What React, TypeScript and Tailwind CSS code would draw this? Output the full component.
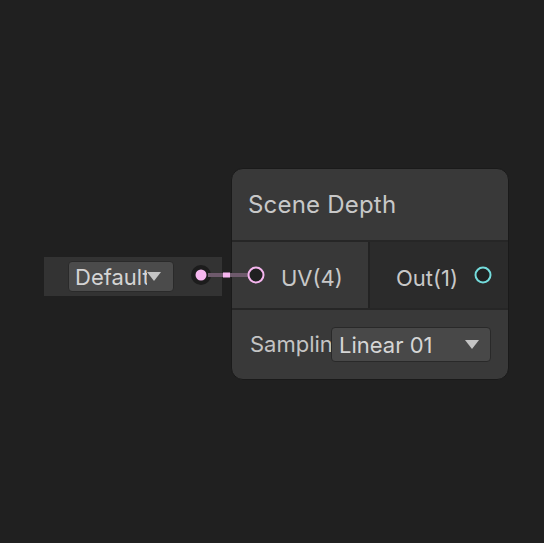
const FONT = { fontFamily: 'Inter, "Noto Sans", sans-serif' };

function Caret({ className }: { className?: string }) {
  return (
    <svg width="14" height="9" viewBox="0 0 14 9" className={className}>
      <path d="M0 0 L14 0 L7 9 Z" fill="#c4c4c4" />
    </svg>
  );
}

function PropertyBlock() {
  return (
    <div className="absolute left-[44px] top-[257px] w-[178px] h-[39px] bg-[#333333] flex items-center">
      <div className="ml-[24px] w-[106px] h-[31px] rounded-[4px] bg-[#4b4b4b] border border-[#2a2a2a] flex items-center pl-[6px]">
        <span className="w-[72px] overflow-hidden whitespace-nowrap text-[22px] leading-none text-[#d4d4d4]">
          Default
        </span>
        <Caret />
      </div>
    </div>
  );
}

function Wire() {
  return (
    <svg className="absolute left-[188px] top-[262px]" width="80" height="26" viewBox="0 0 80 26">
      <circle cx="13" cy="13" r="10" fill="#1c1c1c" />
      <circle cx="13" cy="13" r="5.5" fill="#f6b6ef" />
      <rect x="20" y="11" width="42" height="4" fill="#6e5a6c" />
      <rect x="35" y="10.5" width="7" height="5" fill="#f6b6ef" />
      <circle cx="68" cy="13" r="7.5" fill="#202020" stroke="#f6b6ef" strokeWidth="2" />
    </svg>
  );
}

function SceneDepthNode() {
  return (
    <div className="absolute left-[231px] top-[168px] w-[278px] h-[212px] rounded-[12px] border border-[#1a1a1a] bg-[#393939] overflow-hidden flex flex-col">
      <div className="h-[73px] flex items-center pl-[16px] border-b-[2px] border-[#262626]">
        <span className="text-[24px] text-[#c8c8c8] tracking-[0.2px]">Scene Depth</span>
      </div>
      <div className="h-[66px] flex bg-[#232323]">
        <div className="w-[136px] bg-[#383838] flex items-center pl-[49px] pt-[7px]">
          <span className="text-[22px] text-[#c8c8c8]">UV(4)</span>
        </div>
        <div className="flex-1 ml-[2px] bg-[#2b2b2b] flex items-center justify-end pr-[16px] gap-[16px]">
          <span className="text-[22px] text-[#c8c8c8] pt-[7px]">Out(1)</span>
          <svg width="18" height="18" viewBox="0 0 18 18">
            <circle cx="9" cy="9" r="7.5" fill="#202020" stroke="#74dcdc" strokeWidth="2" />
          </svg>
        </div>
      </div>
      <div className="flex-1 border-t-[2px] border-[#262626] flex items-center pl-[18px]">
        <span className="w-[81px] overflow-hidden whitespace-nowrap text-[22px] text-[#c4c4c4]">
          Sampling
        </span>
        <div className="w-[160px] h-[35px] rounded-[4px] bg-[#484848] border border-[#292929] flex items-center pl-[7px] pr-[11px] justify-between">
          <span className="text-[22px] leading-none text-[#d6d6d6]">Linear 01</span>
          <Caret />
        </div>
      </div>
    </div>
  );
}

export default function App() {
  return (
    <div className="relative w-[544px] h-[543px] bg-[#202020] overflow-hidden" style={FONT}>
      <PropertyBlock />
      <SceneDepthNode />
      <Wire />
    </div>
  );
}
